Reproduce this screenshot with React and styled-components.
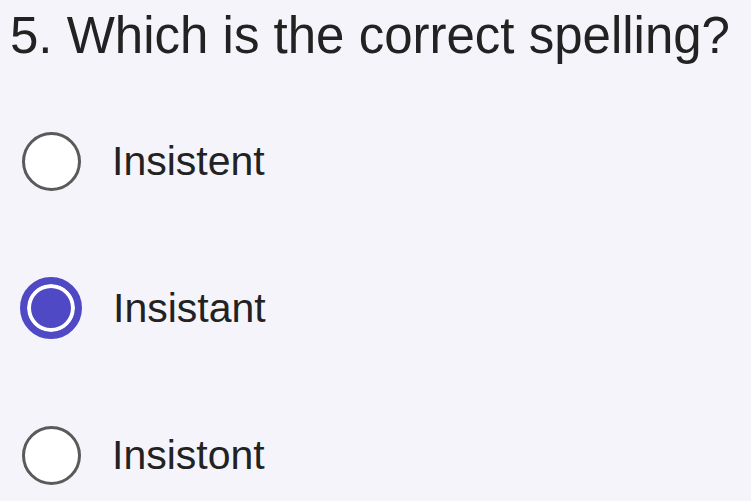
import React, { useState } from "react";
import styled, { createGlobalStyle } from "styled-components";

const GlobalStyle = createGlobalStyle`
  html, body {
    margin: 0;
    padding: 0;
    background: #f5f4fa;
  }
  body {
    font-family: "Liberation Sans", Arial, sans-serif;
    color: #222;
  }
`;

const Page = styled.div`
  width: 751px;
  height: 501px;
  overflow: hidden;
  padding: 7px 0 0 10px;
  box-sizing: border-box;
`;

const Question = styled.h1`
  margin: 0;
  font-size: 51px;
  font-weight: 400;
  line-height: 58px;
  color: #222;
`;

const Options = styled.div`
  display: flex;
  flex-direction: column;
  gap: 85px;
  margin-top: 65px;
`;

const Option = styled.label`
  display: flex;
  align-items: center;
  gap: 31px;
  height: 62px;
  cursor: pointer;
`;

const Radio = styled.span`
  box-sizing: border-box;
  width: ${({ checked }) => (checked ? 62 : 59)}px;
  height: ${({ checked }) => (checked ? 62 : 59)}px;
  margin-left: ${({ checked }) => (checked ? 10 : 12)}px;
  border-radius: 50%;
  border: ${({ checked }) => (checked ? "7px solid #4f49c6" : "3px solid #5a5a5a")};
  background: ${({ checked }) => (checked ? "#4f49c6" : "#fff")};
  box-shadow: ${({ checked }) => (checked ? "inset 0 0 0 4px #fff" : "none")};
  flex-shrink: 0;
`;

const Label = styled.span`
  font-size: 41px;
  line-height: 46px;
  color: #222;
`;

const options = ["Insistent", "Insistant", "Insistont"];

export default function App() {
  const [selected, setSelected] = useState(1);
  return (
    <Page>
      <GlobalStyle />
      <Question>5. Which is the correct spelling?</Question>
      <Options>
        {options.map((text, i) => (
          <Option key={text} onClick={() => setSelected(i)}>
            <Radio checked={selected === i} />
            <Label>{text}</Label>
          </Option>
        ))}
      </Options>
    </Page>
  );
}
